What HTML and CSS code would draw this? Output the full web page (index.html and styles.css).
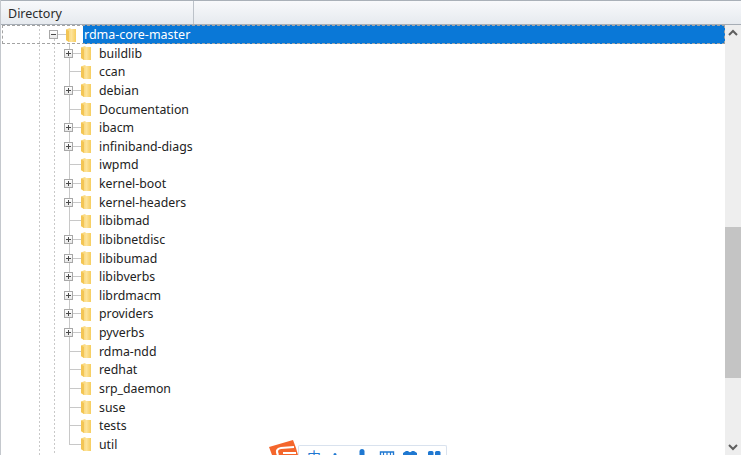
FILE: index.html
```html
<!DOCTYPE html>
<html lang="en">
<head>
<meta charset="utf-8">
<title>Directory</title>
<link rel="stylesheet" href="styles.css">
</head>
<body>
<div class="window">
  <header class="header">
    <div class="col col-name">Directory</div>
    <div class="col col-rest"></div>
  </header>
  <div class="content">
    <main class="tree">
      <div class="row root">
        <span class="box"><i class="h"></i></span>
        <span class="stub"></span>
        <svg class="folder" viewBox="0 0 10 14"><use href="#f"/></svg>
        <span class="label">rdma-core-master</span>
      </div>
      <div class="row child exp"><span class="box"><i class="h"></i><i class="v"></i></span><span class="stub"></span><svg class="folder" viewBox="0 0 10 14"><use href="#f"/></svg><span class="label">buildlib</span></div>
      <div class="row child"><span class="box none"></span><span class="stub"></span><svg class="folder" viewBox="0 0 10 14"><use href="#f"/></svg><span class="label">ccan</span></div>
      <div class="row child exp"><span class="box"><i class="h"></i><i class="v"></i></span><span class="stub"></span><svg class="folder" viewBox="0 0 10 14"><use href="#f"/></svg><span class="label">debian</span></div>
      <div class="row child"><span class="box none"></span><span class="stub"></span><svg class="folder" viewBox="0 0 10 14"><use href="#f"/></svg><span class="label">Documentation</span></div>
      <div class="row child exp"><span class="box"><i class="h"></i><i class="v"></i></span><span class="stub"></span><svg class="folder" viewBox="0 0 10 14"><use href="#f"/></svg><span class="label">ibacm</span></div>
      <div class="row child exp"><span class="box"><i class="h"></i><i class="v"></i></span><span class="stub"></span><svg class="folder" viewBox="0 0 10 14"><use href="#f"/></svg><span class="label">infiniband-diags</span></div>
      <div class="row child"><span class="box none"></span><span class="stub"></span><svg class="folder" viewBox="0 0 10 14"><use href="#f"/></svg><span class="label">iwpmd</span></div>
      <div class="row child exp"><span class="box"><i class="h"></i><i class="v"></i></span><span class="stub"></span><svg class="folder" viewBox="0 0 10 14"><use href="#f"/></svg><span class="label">kernel-boot</span></div>
      <div class="row child exp"><span class="box"><i class="h"></i><i class="v"></i></span><span class="stub"></span><svg class="folder" viewBox="0 0 10 14"><use href="#f"/></svg><span class="label">kernel-headers</span></div>
      <div class="row child"><span class="box none"></span><span class="stub"></span><svg class="folder" viewBox="0 0 10 14"><use href="#f"/></svg><span class="label">libibmad</span></div>
      <div class="row child exp"><span class="box"><i class="h"></i><i class="v"></i></span><span class="stub"></span><svg class="folder" viewBox="0 0 10 14"><use href="#f"/></svg><span class="label">libibnetdisc</span></div>
      <div class="row child exp"><span class="box"><i class="h"></i><i class="v"></i></span><span class="stub"></span><svg class="folder" viewBox="0 0 10 14"><use href="#f"/></svg><span class="label">libibumad</span></div>
      <div class="row child exp"><span class="box"><i class="h"></i><i class="v"></i></span><span class="stub"></span><svg class="folder" viewBox="0 0 10 14"><use href="#f"/></svg><span class="label">libibverbs</span></div>
      <div class="row child exp"><span class="box"><i class="h"></i><i class="v"></i></span><span class="stub"></span><svg class="folder" viewBox="0 0 10 14"><use href="#f"/></svg><span class="label">librdmacm</span></div>
      <div class="row child exp"><span class="box"><i class="h"></i><i class="v"></i></span><span class="stub"></span><svg class="folder" viewBox="0 0 10 14"><use href="#f"/></svg><span class="label">providers</span></div>
      <div class="row child exp"><span class="box"><i class="h"></i><i class="v"></i></span><span class="stub"></span><svg class="folder" viewBox="0 0 10 14"><use href="#f"/></svg><span class="label">pyverbs</span></div>
      <div class="row child"><span class="box none"></span><span class="stub"></span><svg class="folder" viewBox="0 0 10 14"><use href="#f"/></svg><span class="label">rdma-ndd</span></div>
      <div class="row child"><span class="box none"></span><span class="stub"></span><svg class="folder" viewBox="0 0 10 14"><use href="#f"/></svg><span class="label">redhat</span></div>
      <div class="row child"><span class="box none"></span><span class="stub"></span><svg class="folder" viewBox="0 0 10 14"><use href="#f"/></svg><span class="label">srp_daemon</span></div>
      <div class="row child"><span class="box none"></span><span class="stub"></span><svg class="folder" viewBox="0 0 10 14"><use href="#f"/></svg><span class="label">suse</span></div>
      <div class="row child"><span class="box none"></span><span class="stub"></span><svg class="folder" viewBox="0 0 10 14"><use href="#f"/></svg><span class="label">tests</span></div>
      <div class="row child last"><span class="box none"></span><span class="stub"></span><svg class="folder" viewBox="0 0 10 14"><use href="#f"/></svg><span class="label">util</span></div>
    </main>
    <aside class="scrollbar">
      <svg class="arrow" viewBox="0 0 16 16"><path d="M4 10l4-4 4 4" /></svg>
      <div class="track"><div class="thumb"></div></div>
      <svg class="arrow" viewBox="0 0 16 16"><path d="M4 6l4 4 4-4" /></svg>
    </aside>
  </div>
</div>
<div class="ime">
  <svg class="ime-logo" viewBox="0 0 30 15"><path d="M1 7L25 0l3 8 2 7H4z" fill="#f4662c"/><path d="M26 7l-13 1c-4 .5-5 3-3 7" fill="none" stroke="#fff" stroke-width="2.200"/><path d="M15 13h13" stroke="#fff" stroke-width="2"/></svg>
  <div class="ime-bar">
    <span class="ime-zh">中</span>
    <svg class="ime-icon i-dot" viewBox="0 0 16 11"><circle cx="8" cy="2.500" r="1.500"/><circle cx="8" cy="7" r="2.500"/></svg>
    <svg class="ime-icon i-mic" viewBox="0 0 16 11"><rect x="5.500" y="0" width="5" height="11" rx="2.500"/></svg>
    <svg class="ime-icon i-key" viewBox="0 0 16 11"><path d="M1.500 1h13v9h-13z" fill="none" stroke="#1f78d1" stroke-width="1.400"/><path d="M4.500 1v4M8 1v4M11.500 1v4" stroke="#1f78d1" stroke-width="1.200" fill="none"/></svg>
    <svg class="ime-icon i-shirt" viewBox="0 0 16 11"><path d="M1 2l3-2 2 0c1 1.500 3 1.500 4 0h2l3 2v9H1z"/></svg>
    <svg class="ime-icon i-grid" viewBox="0 0 16 11"><rect x="2" y="0" width="5.500" height="5.500" rx="1.500"/><rect x="9" y="0" width="5.500" height="5.500" rx="1.500"/></svg>
  </div>
</div>
<svg class="defs" width="0" height="0" aria-hidden="true">
  <defs>
    <linearGradient id="g" x1="0" x2="1" y1="0" y2="0">
      <stop offset="0" stop-color="#f6cf68"/><stop offset=".55" stop-color="#fde39a"/><stop offset="1" stop-color="#f6cd5f"/>
    </linearGradient>
    <symbol id="f" viewBox="0 0 10 14">
      <path d="M0 1.500L4 0l1 1h5v13H3L0 12z" fill="url(#g)"/>
      <path d="M0 1.500V12l3 2V3z" fill="#f3c554"/>
    </symbol>
  </defs>
</svg>
</body>
</html>
```
FILE: styles.css
```css
* { box-sizing: border-box; }
html, body { margin: 0; height: 100%; overflow: hidden; background: #fff; }
body { font-family: "Noto Sans", "Liberation Sans", sans-serif; font-size: 12.300px; color: #222; position: relative; }

.window { display: flex; flex-direction: column; width: 741px; height: 455px; border-left: 1px solid #c4c8cd; }

.header {
  flex: 0 0 25px;
  display: flex;
  border-top: 1px solid #a9b0b8;
  border-bottom: 1px solid #a6adb5;
  background: linear-gradient(#f8f9fb, #e6eaef);
}
.col { display: flex; align-items: center; padding: 2px 0 0 7px; font-size: 12.500px; color: #2b2b2b; }
.col-name { width: 193px; border-right: 1px solid #bcc2c9; }
.col-rest { flex: 1; }

.content { flex: 1; display: flex; min-height: 0; }

.tree {
  flex: 1;
  min-width: 0;
  padding: 0.300px 0 0 1px;
  display: grid;
  grid-auto-rows: 18.636px;
  align-content: start;
  overflow: hidden;
  background-image:
    repeating-linear-gradient(#c9c9c9 0 2px, transparent 2px 4px),
    repeating-linear-gradient(#c9c9c9 0 2px, transparent 2px 4px);
  background-size: 1px 100%, 1px 100%;
  background-position: 38px 0, 53px 14px;
  background-repeat: no-repeat;
}

.row { display: flex; align-items: center; position: relative; white-space: nowrap; }

.box {
  flex: none;
  width: 9px;
  height: 9px;
  border: 1px solid #a8a8a8;
  background: linear-gradient(#fff, #e8e8e8);
  position: relative;
  z-index: 1;
}
.box.none { width: 5px; border: 0; background: none; }
.box .h { position: absolute; left: 1px; right: 1px; top: 3px; height: 1px; background: #4a4a4a; }
.box .v { position: absolute; top: 1px; bottom: 1px; left: 3px; width: 1px; background: #4a4a4a; }

.stub { flex: none; width: 8px; height: 1px; background: #c8c8c8; }
.box.none + .stub { width: 12px; }

.folder { flex: none; width: 10px; height: 14px; }

.root { padding-left: 47px; z-index: 1; }
.root .label {
  flex: 1;
  align-self: stretch;
  display: flex;
  align-items: center;
  margin-left: 7px;
  padding-left: 1px;
  background: #0a78d7;
  color: #fff;
  font-size: 12.500px;
}
.root::before {
  content: "";
  position: absolute;
  inset: 0;
  border: 1px dashed #a3a3a3;
  pointer-events: none;
}

.child { padding-left: 62px; }
.child .label { margin-left: 8px; }
.child::before {
  content: "";
  position: absolute;
  left: 67px;
  top: 0;
  bottom: 0;
  width: 1px;
  background: #c8c8c8;
}
.child.last::before { bottom: 50%; }

.scrollbar { flex: 0 0 16px; display: flex; flex-direction: column; background: #eeeeee; }
.arrow { flex: none; width: 16px; height: 16px; fill: none; stroke: #5f5f5f; stroke-width: 2; }
.track { flex: 1; padding-top: 186px; }
.thumb { height: 151px; background: #c4c4c4; }

.ime { position: absolute; left: 268px; top: 440px; display: flex; align-items: flex-start; }
.ime-logo { width: 30px; height: 15px; display: block; }
.ime-bar {
  margin-top: 5px;
  width: 149px;
  height: 10px;
  background: #fff;
  border: 1px solid #d9e2ee;
  border-bottom: 0;
  border-radius: 2px 2px 0 0;
  display: flex;
  align-items: flex-start;
  overflow: hidden;
  padding: 5px 0 0 8px;
}
.ime-zh { flex: none; font-family: "Noto Sans CJK SC", sans-serif; font-size: 14px; line-height: 16px; color: #1f78d1; margin-top: -3px; }
.ime-icon { flex: none; width: 16px; height: 11px; fill: #1f78d1; }
.i-dot { margin-left: 6px; margin-top: 1px; }
.i-mic { margin-left: 11px; margin-top: -2px; }
.i-key { margin-left: 9px; }
.i-shirt { margin-left: 7px; }
.i-grid { margin-left: 8px; }
.defs { position: absolute; }
```
